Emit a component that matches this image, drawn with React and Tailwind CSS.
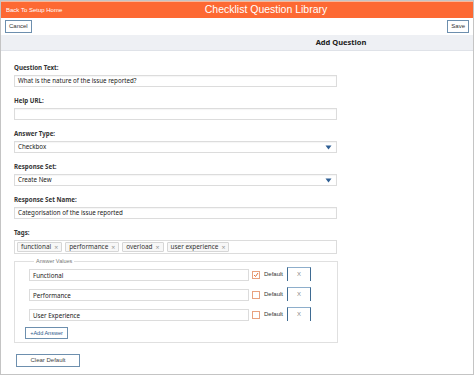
import React from "react";

const Label = ({ children }) => (
  <div className="h-[8px] leading-[8px] text-[6.2px] font-bold text-[#333]">{children}</div>
);

const TextInput = ({ value, select }) => (
  <div className="mt-[3px] h-[12px] w-[323px] border border-[#dcdcdc] bg-white flex items-center px-[3px] text-[6.2px] text-[#222] shadow-[inset_0_1px_1px_rgba(0,0,0,0.04)]">
    <span className="flex-1">{value}</span>
    {select && (
      <svg width="7" height="5" viewBox="0 0 7 5" className="mr-[1px]">
        <path d="M0.5 0.5 L6.5 0.5 L3.5 4.5 Z" fill="#2f5f94" />
      </svg>
    )}
  </div>
);

const Field = ({ label, value, select }) => (
  <div className="mb-[10px]">
    <Label>{label}</Label>
    <TextInput value={value} select={select} />
  </div>
);

const Tag = ({ children }) => (
  <span className="h-[10px] border border-[#d6d6d6] bg-[#f7f7f7] rounded-[1px] px-[3px] flex items-center gap-[3px] text-[6.4px] text-[#333]">
    {children}
    <span className="text-[#999] text-[7px] leading-none">×</span>
  </span>
);

const AnswerRow = ({ value, checked }) => (
  <div className="flex items-center h-[14px] mb-[6px]">
    <div className="w-[220px] h-[12px] mt-[2px] border border-[#dcdcdc] flex items-center px-[3px] text-[6.2px] text-[#222]">
      {value}
    </div>
    <div className="ml-[3px] w-[8px] h-[8px] border border-[#e9a27f] bg-white flex items-center justify-center mt-[1px]">
      {checked && (
        <svg width="6" height="6" viewBox="0 0 6 6">
          <path d="M1 3 L2.5 4.5 L5 1" stroke="#e0743f" strokeWidth="1" fill="none" />
        </svg>
      )}
    </div>
    <span className="ml-[4px] text-[6px] text-[#333] font-['Liberation_Sans',sans-serif] mt-[1px]">Default</span>
    <div className="ml-[4px] w-[24px] h-[14px] border-x border-x-[#3f6b92] border-t border-t-[#8eaecb] bg-white flex items-center justify-center text-[6px] text-[#8a8a8a] font-['Liberation_Sans',sans-serif]">
      X
    </div>
  </div>
);

export default function App() {
  return (
    <div className="w-[474px] h-[375px] bg-white border border-[#c4c4c4] overflow-hidden font-['Noto_Sans',sans-serif] flex flex-col">
      <div className="h-[17px] bg-[#fd6933] border-t border-t-[#f9b79a] flex items-center text-white font-['Liberation_Sans',sans-serif]">
        <span className="pl-[5px] text-[6px] w-[60px] whitespace-nowrap">Back To Setup Home</span>
        <span className="flex-1 text-center text-[10.5px] pr-[2px]">Checklist Question Library</span>
      </div>
      <div className="h-[17px] flex items-center justify-between px-[4px] font-['Liberation_Sans',sans-serif]">
        <div className="h-[13px] px-[3px] border border-[#6d8fae] flex items-center text-[6px] text-[#333]">Cancel</div>
        <div className="h-[13px] px-[3px] border border-[#6d8fae] flex items-center text-[6px] text-[#333]">Save</div>
      </div>
      <div className="h-[16px] bg-[#eef0f4] border-b border-[#dfe2e8] flex items-center pl-[208px]">
        <span className="flex-1 text-center text-[7.5px] font-bold text-[#222]">Add Question</span>
      </div>
      <div className="pt-[13px] pl-[13px]">
        <Field label="Question Text:" value="What is the nature of the issue reported?" />
        <Field label="Help URL:" value="" />
        <Field label="Answer Type:" value="Checkbox" select />
        <Field label="Response Set:" value="Create New" select />
        <Field label="Response Set Name:" value="Categorisation of the issue reported" />
        <div className="mb-[3px]">
          <Label>Tags:</Label>
          <div className="mt-[3px] h-[14px] w-[323px] border border-[#dcdcdc] flex items-center gap-[3px] px-[2px]">
            <Tag>functional</Tag>
            <Tag>performance</Tag>
            <Tag>overload</Tag>
            <Tag>user experience</Tag>
          </div>
        </div>
        <fieldset className="w-[324px] border border-[#e0e0e0] px-[14px] pb-[3px] pt-[2px]">
          <legend className="ml-[5px] px-[2px] text-[5.5px] text-[#777] font-['Liberation_Sans',sans-serif]">Answer Values</legend>
          <AnswerRow value="Functional" checked />
          <AnswerRow value="Performance" />
          <AnswerRow value="User Experience" />
          <div className="-ml-[4px] mt-[2px] h-[12px] w-[43px] border border-[#6d8fae] flex items-center justify-center text-[5.5px] text-[#2c5a8a] font-['Liberation_Sans',sans-serif]">
            +Add Answer
          </div>
        </fieldset>
        <div className="ml-[2px] mt-[11px] h-[13px] w-[64px] border border-[#6d8fae] flex items-center justify-center text-[6px] text-[#444] font-['Liberation_Sans',sans-serif]">
          Clear Default
        </div>
      </div>
    </div>
  );
}
